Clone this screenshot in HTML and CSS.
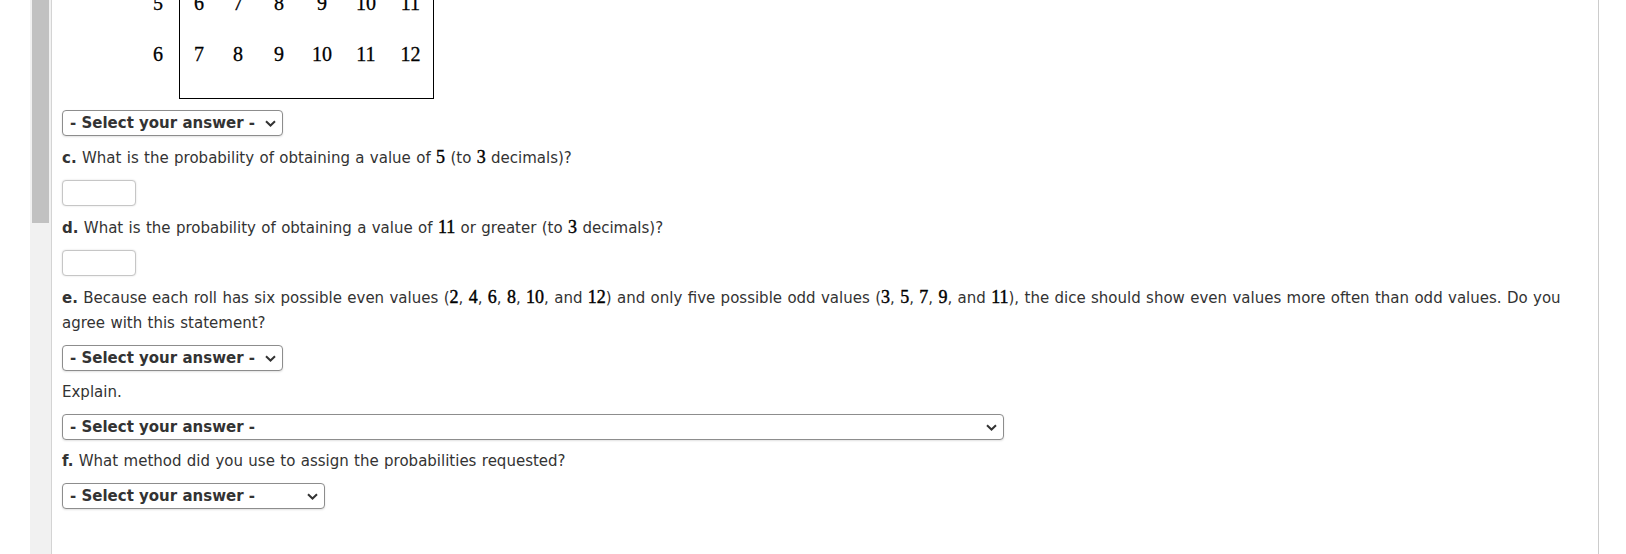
FILE: index.html
```html
<!DOCTYPE html>
<html lang="en">
<head>
  <meta charset="UTF-8" />
  <meta name="viewport" content="width=device-width, initial-scale=1" />
  <title>Probability - two dice</title>
  <link rel="stylesheet" href="styles.css">
</head>
<body>
<div class="page">
  <div class="gutter"></div>
  <div class="track"><div class="thumb"></div></div>

  <main class="content">
    <!-- sum of two dice, scrolled so only the last rows show -->
    <div class="dice">
      <div class="labels">
        <span>1</span><span>2</span><span>3</span><span>4</span><span>5</span><span>6</span>
      </div>
      <div class="sums">
        <span>2</span><span>3</span><span>4</span><span>5</span><span>6</span><span>7</span>
        <span>3</span><span>4</span><span>5</span><span>6</span><span>7</span><span>8</span>
        <span>4</span><span>5</span><span>6</span><span>7</span><span>8</span><span>9</span>
        <span>5</span><span>6</span><span>7</span><span>8</span><span>9</span><span>10</span>
        <span>6</span><span>7</span><span>8</span><span>9</span><span>10</span><span>11</span>
        <span>7</span><span>8</span><span>9</span><span>10</span><span>11</span><span>12</span>
      </div>
    </div>

    <div class="select w-short">
      <select><option>- Select your answer -</option></select>
      <svg width="11" height="7" viewBox="0 0 11 7"><path d="M1 1.2l4.5 4.3 4.5-4.3" fill="none" stroke="#333" stroke-width="2"/></svg>
    </div>

    <p><b>c.</b> What is the probability of obtaining a value of <span class="math">5</span> (to <span class="math">3</span> decimals)?</p>
    <input type="text" class="answer" />

    <p><b>d.</b> What is the probability of obtaining a value of <span class="math">11</span> or greater (to <span class="math">3</span> decimals)?</p>
    <input type="text" class="answer" />

    <p><b>e.</b> Because each roll has six possible even values (<span class="math">2</span>, <span class="math">4</span>, <span class="math">6</span>, <span class="math">8</span>, <span class="math">10</span>, and <span class="math">12</span>) and only five possible odd values (<span class="math">3</span>, <span class="math">5</span>, <span class="math">7</span>, <span class="math">9</span>, and <span class="math">11</span>), the dice should show even values more often than odd values. Do you agree with this statement?</p>
    <div class="select w-short">
      <select><option>- Select your answer -</option></select>
      <svg width="11" height="7" viewBox="0 0 11 7"><path d="M1 1.2l4.5 4.3 4.5-4.3" fill="none" stroke="#333" stroke-width="2"/></svg>
    </div>

    <p>Explain.</p>
    <div class="select w-wide">
      <select><option>- Select your answer -</option></select>
      <svg width="11" height="7" viewBox="0 0 11 7"><path d="M1 1.2l4.5 4.3 4.5-4.3" fill="none" stroke="#333" stroke-width="2"/></svg>
    </div>

    <p><b>f.</b> What method did you use to assign the probabilities requested?</p>
    <div class="select w-mid">
      <select><option>- Select your answer -</option></select>
      <svg width="11" height="7" viewBox="0 0 11 7"><path d="M1 1.2l4.5 4.3 4.5-4.3" fill="none" stroke="#333" stroke-width="2"/></svg>
    </div>
  </main>

  <div class="side"></div>
</div>
</body>
</html>
```

FILE: styles.css
```css
html, body {
  margin: 0;
  height: 100%;
  overflow: hidden;
  background: #fff;
}
body {
  font-family: "DejaVu Sans", Verdana, sans-serif;
  font-size: 15px;
  color: #333;
}
.page {
  display: flex;
  height: 100%;
}
.gutter {
  width: 30px;
}
.track {
  width: 21px;
  background: #f1f1f1;
  border-right: 1px solid #d4d4d4;
}
.thumb {
  width: 17px;
  height: 223px;
  margin-left: 2px;
  background: #c1c1c1;
}
.content {
  flex: 1;
  padding: 0 10px;
  border-right: 1px solid #ccc;
  display: flex;
  flex-direction: column;
  align-items: flex-start;
}
.side {
  width: 27px;
}

/* dice table */
.dice {
  display: flex;
  margin-top: -226px;
  margin-bottom: 11px;
  font-family: "Liberation Serif", "Times New Roman", serif;
  font-size: 20px;
  color: #000;
  -webkit-text-stroke: 0.3px #000;
}
.labels {
  width: 101px;
  margin-right: 16px;
  display: flex;
  flex-direction: column;
  align-items: flex-end;
}
.labels span {
  height: 51px;
  line-height: 51px;
}
.sums {
  display: grid;
  grid-template-columns: 38px 40px 42px 44px 44px 45px;
  grid-auto-rows: 51px;
  align-items: center;
  justify-items: center;
  padding-bottom: 18px;
  border: 1px solid #000;
  border-top: none;
}

p {
  margin: 9px 0;
  line-height: 25px;
  word-spacing: 0.6px;
}
.math {
  font-family: "Liberation Serif", "Times New Roman", serif;
  font-size: 18px;
  color: #000;
  -webkit-text-stroke: 0.4px #000;
}

.answer {
  box-sizing: border-box;
  width: 74px;
  height: 26px;
  margin: 0;
  border: 1px solid #c6c6c6;
  border-radius: 4px;
  box-shadow: 0 0 2px rgba(0, 0, 0, 0.15);
}

.select {
  box-sizing: border-box;
  display: flex;
  align-items: center;
  height: 26px;
  padding: 0 6px 0 7px;
  border: 1px solid #8d8d8d;
  border-radius: 4px;
  box-shadow: 0 1px 2px rgba(0, 0, 0, 0.12);
  background: #fff;
}
.select select {
  flex: 1;
  appearance: none;
  border: none;
  background: transparent;
  padding: 0;
  margin: 0;
  font-family: "DejaVu Sans", Verdana, sans-serif;
  font-size: 15px;
  font-weight: bold;
  color: #333;
  outline: none;
}
.w-short { width: 221px; }
.w-mid { width: 263px; }
.w-wide { width: 942px; }
```
